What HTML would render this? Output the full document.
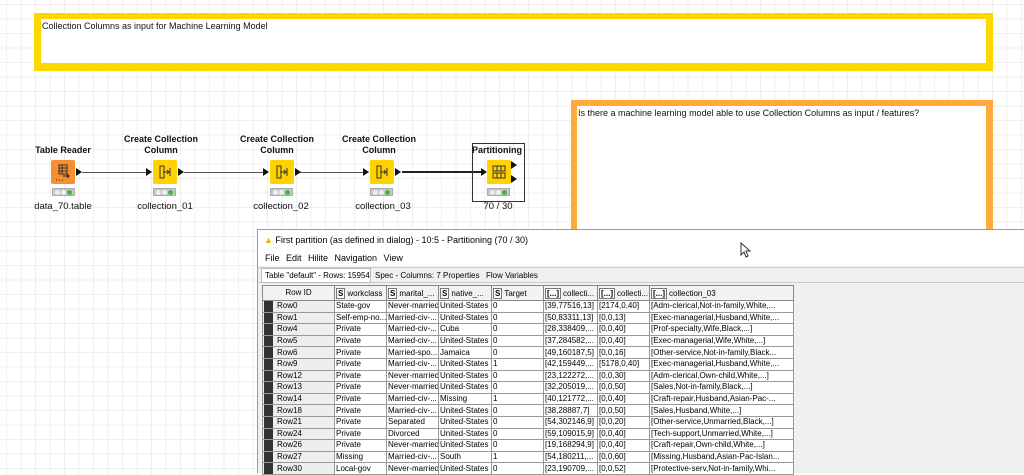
<!DOCTYPE html>
<html><head><meta charset="utf-8"><style>
*{margin:0;padding:0;box-sizing:border-box}
body{width:1024px;height:473px;overflow:hidden;position:relative;font-family:"Liberation Sans",Arial,sans-serif;background:#fff;
background-image:linear-gradient(#efefef 1px,transparent 1px),linear-gradient(90deg,#efefef 1px,transparent 1px);background-size:14.5px 14.5px;background-position:6px 4px}
.abs{position:absolute}
.ann{position:absolute;background:#fff;font-size:9px;color:#111;padding:2px 1px}
.lbl{position:absolute;font-size:9px;font-weight:bold;text-align:center;line-height:11px;color:#111;width:100px}
.nm{position:absolute;font-size:9.5px;text-align:center;width:100px;color:#111}
.icon{position:absolute;width:24px;height:24px;border-radius:2px}
.st{position:absolute;width:23px;height:8px;background:#c8c8c8;border:1px solid #aaa;display:flex;align-items:center;justify-content:space-around;padding:0 1px}
.st i{display:block;width:5px;height:5px;border-radius:50%;background:#eee}
.st i.g{background:#3dba3d}
.tri{position:absolute;width:0;height:0;border-top:4px solid transparent;border-bottom:4px solid transparent;border-left:6px solid #111}
.line{position:absolute;height:1px;background:#555}
.win{position:absolute;left:257px;top:229px;width:767px;height:244px;background:#f0f0f0;border-left:1px solid #999;border-top:1px solid #999}
table{border-collapse:collapse;table-layout:fixed;width:531px;font-size:8px;position:absolute;left:4px;top:55px;background:#fff}
td,th{border:1px solid #999;height:11.6px;padding:0 1px;white-space:nowrap;overflow:hidden;font-weight:normal;text-align:left;line-height:10px}
th{height:15px;background:#f2f2f2;border-color:#888}
.s{display:inline-block;border:1px solid #777;padding:0 1px;font-weight:bold;background:#fff;margin-right:2px;font-size:8px;line-height:9px}
.rid{background:#eee;position:relative;padding-left:14px}
.rid:before{content:"";position:absolute;left:1px;top:0;bottom:0;width:9px;background:#333}
.tab{position:absolute;top:3px;font-size:8px;white-space:nowrap}
</style></head><body>
<div class="abs" style="left:34px;top:13px;width:959px;height:58px;background:#ffd700;"></div>
<div class="ann" style="left:41px;top:19px;width:945px;height:44px">Collection Columns as input for Machine Learning Model</div>
<div class="abs" style="left:571px;top:100px;width:422px;height:140px;background:#ffaa3a;"></div>
<div class="ann" style="left:577px;top:106px;width:409px;height:130px">Is there a machine learning model able to use Collection Columns as input / features?</div>

<div class="line" style="left:82px;top:172px;width:64px"></div>
<div class="line" style="left:184px;top:172px;width:79px"></div>
<div class="line" style="left:300px;top:172px;width:63px"></div>
<div class="line" style="left:402px;top:171px;width:80px;height:2px;background:#222"></div>

<div class="lbl" style="left:13px;top:145px">Table Reader</div>
<div class="icon" style="left:51px;top:160px;background:#f68f2e"><svg width="24" height="24"><rect x="8" y="5" width="8" height="9" fill="none" stroke="#333"/><path d="M8 8h8M8 11h8M11 5v9" stroke="#333"/><path d="M12 16h6M16 14l2 2-2 2" stroke="#222" fill="none"/><path d="M5 20h1M8 20h1M11 20h1" stroke="#222"/></svg></div>
<div class="tri" style="left:76px;top:168px"></div>
<div class="st" style="left:52px;top:188px"><i></i><i></i><i class="g"></i></div>
<div class="nm" style="left:13px;top:201px">data_70.table</div>

<div class="lbl" style="left:111px;top:134px">Create Collection<br>Column</div>
<div class="tri" style="left:146px;top:168px"></div>
<div class="icon" style="left:153px;top:160px;background:#ffd200"><svg width="24" height="24"><rect x="7" y="6" width="4" height="12" fill="none" stroke="#333"/><path d="M10 12h6M14 10l2 2-2 2M17 8v8" stroke="#333" fill="none"/></svg></div>
<div class="tri" style="left:178px;top:168px"></div>
<div class="st" style="left:153px;top:188px"><i></i><i></i><i class="g"></i></div>
<div class="nm" style="left:115px;top:201px">collection_01</div>

<div class="lbl" style="left:227px;top:134px">Create Collection<br>Column</div>
<div class="tri" style="left:263px;top:168px"></div>
<div class="icon" style="left:270px;top:160px;background:#ffd200"><svg width="24" height="24"><rect x="7" y="6" width="4" height="12" fill="none" stroke="#333"/><path d="M10 12h6M14 10l2 2-2 2M17 8v8" stroke="#333" fill="none"/></svg></div>
<div class="tri" style="left:295px;top:168px"></div>
<div class="st" style="left:270px;top:188px"><i></i><i></i><i class="g"></i></div>
<div class="nm" style="left:231px;top:201px">collection_02</div>

<div class="lbl" style="left:329px;top:134px">Create Collection<br>Column</div>
<div class="tri" style="left:363px;top:168px"></div>
<div class="icon" style="left:370px;top:160px;background:#ffd200"><svg width="24" height="24"><rect x="7" y="6" width="4" height="12" fill="none" stroke="#333"/><path d="M10 12h6M14 10l2 2-2 2M17 8v8" stroke="#333" fill="none"/></svg></div>
<div class="tri" style="left:395px;top:168px"></div>
<div class="st" style="left:370px;top:188px"><i></i><i></i><i class="g"></i></div>
<div class="nm" style="left:333px;top:201px">collection_03</div>

<div class="abs" style="left:472px;top:143px;width:53px;height:59px;border:1px solid #333"></div>
<div class="lbl" style="left:447px;top:145px">Partitioning</div>
<div class="tri" style="left:481px;top:168px"></div>
<div class="icon" style="left:487px;top:160px;background:#ffd200"><svg width="24" height="24"><rect x="6" y="6" width="12" height="5" fill="none" stroke="#333"/><rect x="6" y="13" width="12" height="5" fill="none" stroke="#333"/><path d="M10 6v5M14 6v5M10 13v5M14 13v5" stroke="#333"/></svg></div>
<div class="tri" style="left:511px;top:161px"></div>
<div class="tri" style="left:511px;top:175px"></div>
<div class="st" style="left:487px;top:188px"><i></i><i></i><i class="g"></i></div>
<div class="nm" style="left:448px;top:201px">70 / 30</div>

<div class="win">
<div class="abs" style="left:0;top:0;width:767px;height:21px;background:#fff;font-size:9px;padding:5px 0 0 6px"><span style="color:#f0b400">▲</span> First partition (as defined in dialog) - 10:5 - Partitioning (70 / 30)</div>
<div class="abs" style="left:0;top:21px;width:767px;height:15px;background:#fff;font-size:9px;padding:2px 0 0 7px;word-spacing:4px">File Edit Hilite Navigation View</div>
<div class="abs" style="left:0;top:37px;width:767px;height:16px;background:#f0f0f0;border-top:1px solid #ccc;border-bottom:1px solid #ccc">
<span class="tab" style="left:3px;top:0;background:#fff;border:1px solid #bbb;padding:2px 3px;height:15px;width:110px">Table "default" - Rows: 15954</span>
<span class="tab" style="left:117px">Spec - Columns: 7</span>
<span class="tab" style="left:185px">Properties</span>
<span class="tab" style="left:228px">Flow Variables</span>
</div>
<table>
<colgroup><col style="width:72px"><col style="width:52px"><col style="width:52px"><col style="width:53px"><col style="width:52px"><col style="width:54px"><col style="width:52px"><col style="width:144px"></colgroup>
<tr><th style="text-align:center">Row ID</th><th><span class="s">S</span>workclass</th><th><span class="s">S</span>marital_...</th><th><span class="s">S</span>native_...</th><th><span class="s">S</span>Target</th><th><span class="s">[...]</span>collecti...</th><th><span class="s">[...]</span>collecti...</th><th><span class="s">[...]</span>collection_03</th></tr>
<tr><td class="rid">Row0</td><td>State-gov</td><td>Never-married</td><td>United-States</td><td>0</td><td>[39,77516,13]</td><td>[2174,0,40]</td><td>[Adm-clerical,Not-in-family,White,...</td></tr>
<tr><td class="rid">Row1</td><td>Self-emp-no...</td><td>Married-civ-...</td><td>United-States</td><td>0</td><td>[50,83311,13]</td><td>[0,0,13]</td><td>[Exec-managerial,Husband,White,...</td></tr>
<tr><td class="rid">Row4</td><td>Private</td><td>Married-civ-...</td><td>Cuba</td><td>0</td><td>[28,338409,...</td><td>[0,0,40]</td><td>[Prof-specialty,Wife,Black,...]</td></tr>
<tr><td class="rid">Row5</td><td>Private</td><td>Married-civ-...</td><td>United-States</td><td>0</td><td>[37,284582,...</td><td>[0,0,40]</td><td>[Exec-managerial,Wife,White,...]</td></tr>
<tr><td class="rid">Row6</td><td>Private</td><td>Married-spo...</td><td>Jamaica</td><td>0</td><td>[49,160187,5]</td><td>[0,0,16]</td><td>[Other-service,Not-in-family,Black...</td></tr>
<tr><td class="rid">Row9</td><td>Private</td><td>Married-civ-...</td><td>United-States</td><td>1</td><td>[42,159449,...</td><td>[5178,0,40]</td><td>[Exec-managerial,Husband,White,...</td></tr>
<tr><td class="rid">Row12</td><td>Private</td><td>Never-married</td><td>United-States</td><td>0</td><td>[23,122272,...</td><td>[0,0,30]</td><td>[Adm-clerical,Own-child,White,...]</td></tr>
<tr><td class="rid">Row13</td><td>Private</td><td>Never-married</td><td>United-States</td><td>0</td><td>[32,205019,...</td><td>[0,0,50]</td><td>[Sales,Not-in-family,Black,...]</td></tr>
<tr><td class="rid">Row14</td><td>Private</td><td>Married-civ-...</td><td>Missing</td><td>1</td><td>[40,121772,...</td><td>[0,0,40]</td><td>[Craft-repair,Husband,Asian-Pac-...</td></tr>
<tr><td class="rid">Row18</td><td>Private</td><td>Married-civ-...</td><td>United-States</td><td>0</td><td>[38,28887,7]</td><td>[0,0,50]</td><td>[Sales,Husband,White,...]</td></tr>
<tr><td class="rid">Row21</td><td>Private</td><td>Separated</td><td>United-States</td><td>0</td><td>[54,302146,9]</td><td>[0,0,20]</td><td>[Other-service,Unmarried,Black,...]</td></tr>
<tr><td class="rid">Row24</td><td>Private</td><td>Divorced</td><td>United-States</td><td>0</td><td>[59,109015,9]</td><td>[0,0,40]</td><td>[Tech-support,Unmarried,White,...]</td></tr>
<tr><td class="rid">Row26</td><td>Private</td><td>Never-married</td><td>United-States</td><td>0</td><td>[19,168294,9]</td><td>[0,0,40]</td><td>[Craft-repair,Own-child,White,...]</td></tr>
<tr><td class="rid">Row27</td><td>Missing</td><td>Married-civ-...</td><td>South</td><td>1</td><td>[54,180211,...</td><td>[0,0,60]</td><td>[Missing,Husband,Asian-Pac-Islan...</td></tr>
<tr><td class="rid">Row30</td><td>Local-gov</td><td>Never-married</td><td>United-States</td><td>0</td><td>[23,190709,...</td><td>[0,0,52]</td><td>[Protective-serv,Not-in-family,Whi...</td></tr>
</table>
<svg class="abs" style="left:482px;top:12px" width="12" height="16"><path d="M1 1v12l3-3 2 5 2-1-2-5h4z" fill="#fff" stroke="#333"/></svg>
</div>
</body></html>
